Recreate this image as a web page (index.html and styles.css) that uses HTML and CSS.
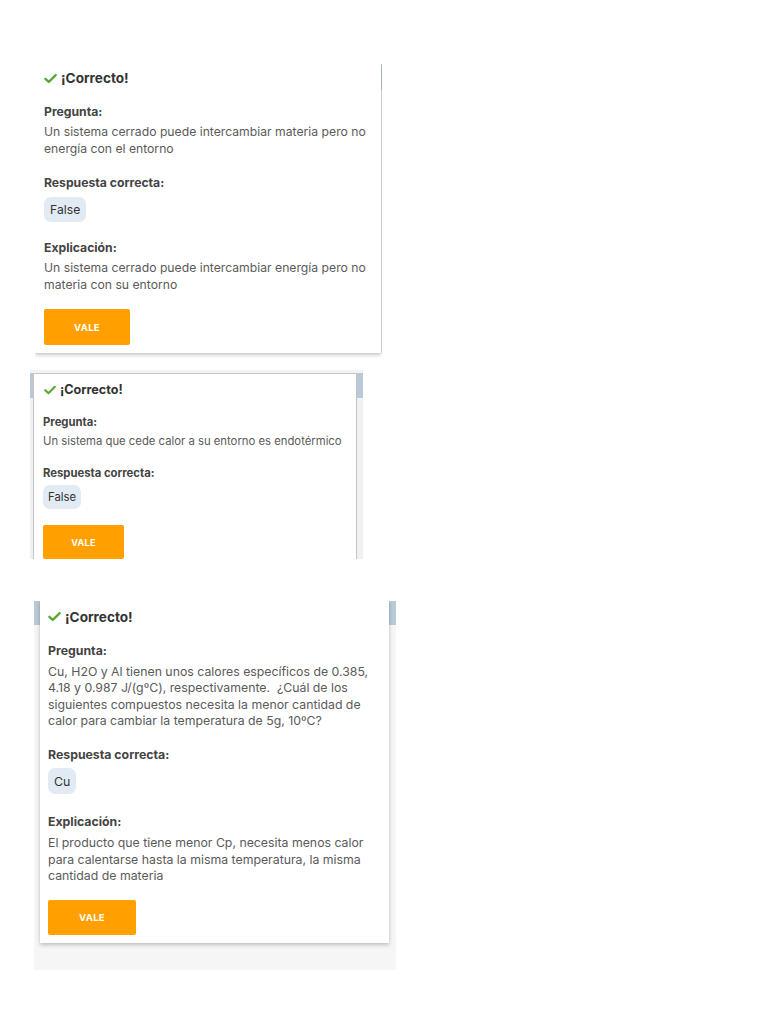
FILE: index.html
```html
<!DOCTYPE html>
<html lang="es">
<head>
<meta charset="utf-8">
<title>¡Correcto!</title>
<link rel="stylesheet" href="styles.css">
</head>
<body>
<main class="page">

  <section class="shot shot-one">
    <div class="card">
      <div class="card-title">
        <svg class="check" viewBox="0 0 14 11" aria-hidden="true"><path d="M1.5 5.8 L5.2 9.2 L12.6 1.8"/></svg>
        <span>¡Correcto!</span>
      </div>
      <div class="block">
        <div class="label">Pregunta:</div>
        <p class="text">Un sistema cerrado puede intercambiar materia pero no energía con el entorno</p>
      </div>
      <div class="block">
        <div class="label">Respuesta correcta:</div>
        <span class="chip">False</span>
      </div>
      <div class="block">
        <div class="label">Explicación:</div>
        <p class="text">Un sistema cerrado puede intercambiar energía pero no materia con su entorno</p>
      </div>
      <button class="btn">VALE</button>
    </div>
  </section>

  <section class="shot shot-two">
    <div class="card">
      <div class="card-title">
        <svg class="check" viewBox="0 0 14 11" aria-hidden="true"><path d="M1.5 5.8 L5.2 9.2 L12.6 1.8"/></svg>
        <span>¡Correcto!</span>
      </div>
      <div class="block">
        <div class="label">Pregunta:</div>
        <p class="text">Un sistema que cede calor a su entorno es endotérmico</p>
      </div>
      <div class="block">
        <div class="label">Respuesta correcta:</div>
        <span class="chip">False</span>
      </div>
      <button class="btn">VALE</button>
    </div>
  </section>

  <section class="shot shot-three">
    <div class="card">
      <div class="card-title">
        <svg class="check" viewBox="0 0 14 11" aria-hidden="true"><path d="M1.5 5.8 L5.2 9.2 L12.6 1.8"/></svg>
        <span>¡Correcto!</span>
      </div>
      <div class="block">
        <div class="label">Pregunta:</div>
        <p class="text">Cu, H2O y Al tienen unos calores específicos de 0.385, 4.18 y 0.987 J/(gºC), respectivamente.&nbsp; ¿Cuál de los siguientes compuestos necesita la menor cantidad de calor para cambiar la temperatura de 5g, 10ºC?</p>
      </div>
      <div class="block">
        <div class="label">Respuesta correcta:</div>
        <span class="chip">Cu</span>
      </div>
      <div class="block">
        <div class="label">Explicación:</div>
        <p class="text">El producto que tiene menor Cp, necesita menos calor para calentarse hasta la misma temperatura, la misma cantidad de materia</p>
      </div>
      <button class="btn">VALE</button>
    </div>
  </section>

</main>
</body>
</html>
```

FILE: styles.css
```css
* { box-sizing: border-box; }

html, body {
  margin: 0;
  padding: 0;
  background: #ffffff;
}

body {
  font-family: Inter, "Noto Sans", "Liberation Sans", sans-serif;
  color: #555555;
  width: 768px;
  height: 1024px;
  overflow: hidden;
}

.page {
  display: flex;
  flex-direction: column;
  align-items: flex-start;
}

/* ---------- screenshot frames ---------- */
.shot {
  display: flex;
  overflow: hidden;
}

.shot-one {
  margin: 64px 0 0 35px;
  width: 347px;
  padding: 0 1.5px 6px 0;
  background: linear-gradient(to bottom, #b8c8d8 0, #b8c8d8 26px, #e6e6e6 26px, #e6e6e6 289px, #ffffff 289px);
}

.shot-two {
  margin: 11px 0 0 30px;
  width: 333px;
  height: 189px;
  padding: 3px 6px 0 3px;
  background: linear-gradient(to bottom, #f3f3f3 0, #f3f3f3 3px, #b9c9d8 3px, #b9c9d8 28px, #f0f0f0 28px);
}

.shot-three {
  margin: 42px 0 0 34px;
  width: 362px;
  height: 369px;
  padding: 0 7px 0 6px;
  background: linear-gradient(to bottom, #b9c9d8 0, #b9c9d8 24px, #f6f6f6 24px);
}

/* ---------- card ---------- */
.card {
  flex: 1;
  background: #ffffff;
  display: flex;
  flex-direction: column;
  align-items: flex-start;
  padding: 4px 9px 8px 9px;
  box-shadow: 0 2px 4px rgba(0, 0, 0, 0.22), 0 0 2px rgba(0, 0, 0, 0.06);
  font-size: 12.2px;
}

.shot-one .card { height: 289px; }

.shot-two .card {
  padding: 7px 9px 0 9px;
  border: 1.5px solid #c4c4c4;
  border-bottom: none;
  font-size: 11.3px;
  box-shadow: none;
}

.shot-three .card {
  height: 342px;
  padding: 6px 8px 8px 8px;
  font-size: 12.3px;
}

.card-title {
  display: flex;
  align-items: center;
  gap: 4px;
  height: 20px;
  font-size: 13.6px;
  font-weight: 700;
  color: #333333;
  margin-bottom: 16px;
}

.shot-two .card-title {
  height: 18px;
  font-size: 12.6px;
  margin-bottom: 16px;
  margin-left: 1px;
}

.check {
  width: 13px;
  height: 11px;
  fill: none;
  stroke: #5aa83a;
  stroke-width: 2.5;
  stroke-linecap: round;
  stroke-linejoin: round;
}

.shot-two .check { width: 12px; height: 10px; }

.block {
  display: flex;
  flex-direction: column;
  align-items: flex-start;
  margin-bottom: 18px;
}

.label {
  font-weight: 700;
  color: #444444;
  line-height: 16px;
  margin-bottom: 4px;
}

.text {
  margin: 0;
  line-height: 16.5px;
  color: #5a5a5a;
}

.shot-two .block { margin-bottom: 17px; }
.shot-two .label { line-height: 15px; }
.shot-two .text { line-height: 15px; }

.shot-three .label { margin-bottom: 5px; }
.shot-three .text { line-height: 16.4px; }

.chip {
  display: inline-flex;
  align-items: center;
  height: 25px;
  margin-top: 2px;
  padding: 0 6px;
  background: #e2ebf3;
  color: #333333;
  border-radius: 7px;
}

.shot-two .chip { height: 24px; margin-top: 0.5px; padding: 0 5px; }
.shot-three .chip { height: 26px; margin-top: 0; margin-bottom: 2px; }

.btn {
  margin-top: -2px;
  width: 86px;
  height: 36px;
  border: none;
  border-radius: 2px;
  background: #ffa000;
  color: #ffffff;
  font-family: Inter, "Noto Sans", "Liberation Sans", sans-serif;
  font-size: 9.5px;
  font-weight: 700;
  letter-spacing: 0.3px;
  padding: 0;
}

.shot-two .btn { width: 81px; height: 34px; font-size: 9px; margin-top: -1px; }
.shot-three .btn { width: 88px; margin-top: -3px; }
```
